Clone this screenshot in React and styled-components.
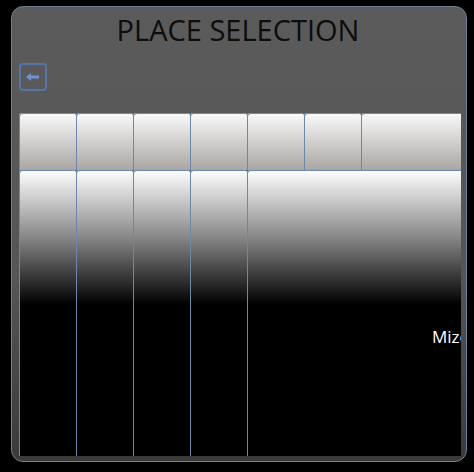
import React from 'react'
import styled, { createGlobalStyle } from 'styled-components'

const GlobalStyle = createGlobalStyle`
    html, body {
        margin: 0;
        padding: 0;
        background: #000;
        font-family: "Open Sans", "DejaVu Sans", sans-serif;
    }
`

const topCells = [57, 57, 57, 57, 57, 57, 140]
const bottomCells = [57, 57, 57, 57]

const App = () => {
    return (
        <S.Page>
            <GlobalStyle />
            <S.Panel>
                <S.Title>PLACE SELECTION</S.Title>
                <S.Toolbar>
                    <S.BackButton aria-label="Back">
                        <svg width="16" height="12" viewBox="0 0 16 12">
                            <path d="M1 6 L6 2 L6 4.5 L14 4.5 L14 7.5 L6 7.5 L6 10 Z" fill="#6f93d6" />
                        </svg>
                    </S.BackButton>
                </S.Toolbar>
                <S.Grid>
                    <S.Row $height={57}>
                        {topCells.map((w, i) => (
                            <S.Cell key={i} $width={w} />
                        ))}
                    </S.Row>
                    <S.Row $height={286}>
                        {bottomCells.map((w, i) => (
                            <S.Cell key={i} $width={w} $tall />
                        ))}
                        <S.Cell $width={300} $tall $label>
                            <S.Label>Mizoram</S.Label>
                        </S.Cell>
                    </S.Row>
                </S.Grid>
            </S.Panel>
        </S.Page>
    )
}

const S = {
    Page: styled.div`
        width: 474px;
        height: 472px;
        padding: 6px 0 0 11px;
        box-sizing: border-box;
    `,
    Panel: styled.div`
        width: 456px;
        height: 456px;
        box-sizing: border-box;
        border: 1px solid #6d8299;
        border-radius: 12px;
        background: linear-gradient(#5b5b5b 0%, #555 60%, #3a3a3a 100%);
        padding: 0 5px 5px 7px;
        display: flex;
        flex-direction: column;
        overflow: hidden;
    `,
    Title: styled.div`
        height: 44px;
        display: flex;
        align-items: center;
        justify-content: center;
        font-family: "Open Sans", "Noto Sans", sans-serif;
        font-size: 29px;
        font-weight: 500;
        color: #0d0d0d;
        padding-right: 4px;
    `,
    Toolbar: styled.div`
        display: flex;
        height: 62px;
        padding-top: 12px;
        box-sizing: border-box;
    `,
    BackButton: styled.div`
        width: 28px;
        height: 28px;
        box-sizing: border-box;
        border: 2px solid #5575a8;
        border-radius: 4px;
        display: flex;
        align-items: center;
        justify-content: center;
    `,
    Grid: styled.div`
        display: flex;
        flex-direction: column;
        width: 442px;
        overflow: hidden;
    `,
    Row: styled.div`
        display: flex;
        height: ${({ $height }) => $height}px;
        flex-shrink: 0;
    `,
    Cell: styled.div`
        flex: 0 0 ${({ $width }) => $width}px;
        box-sizing: border-box;
        border-radius: 3px 3px 0 0;
        box-shadow: inset 1px 1px 0 #6a87ad;
        background: ${({ $tall }) =>
            $tall
                ? 'linear-gradient(#ffffff 0%, #8a8a8a 23%, #000 47%, #000 100%)'
                : 'linear-gradient(#fbfbfb, #a9a5a2)'};
        display: flex;
        align-items: center;
        padding: ${({ $label }) => ($label ? '46px 0 0 185px' : '0')};
    `,
    Label: styled.span`
        font-size: 17px;
        color: #fff;
        white-space: nowrap;
    `,
}

export default App
